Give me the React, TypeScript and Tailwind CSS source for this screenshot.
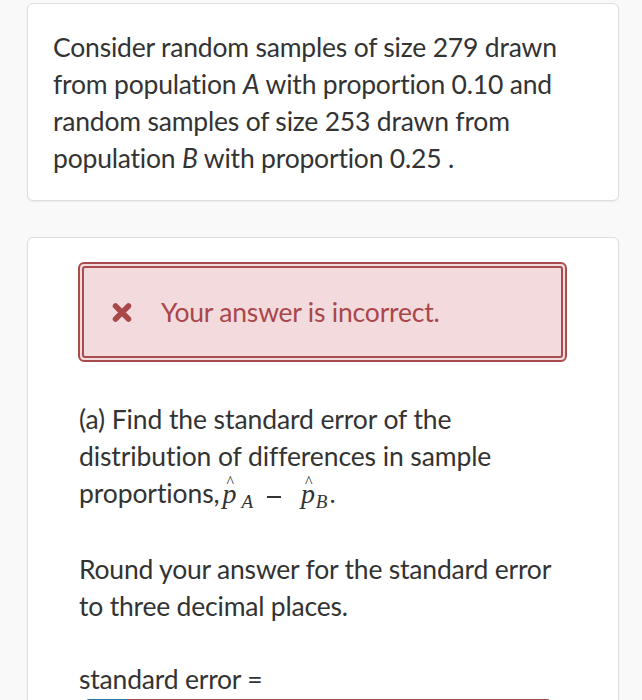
import React from "react"

const lato = { fontFamily: "Lato, 'Open Sans', sans-serif" }

function Hat({ children, sub, gap }: { children: React.ReactNode; sub: string; gap: string }) {
  return (
    <span className="font-['Liberation_Serif',serif] italic leading-none text-[28px]">
      <span className="relative inline-block leading-none">
        <span className="absolute left-[4px] -top-[6px] text-[16px] not-italic leading-none">^</span>
        {children}
      </span>
      <span className={`text-[19px] relative top-[5px] leading-none ${gap}`}>{sub}</span>
    </span>
  )
}

function ErrorIcon() {
  return (
    <svg width="22" height="21" viewBox="0 0 22 21" className="shrink-0">
      <path d="M4.5 4 L17.5 17 M17.5 4 L4.5 17" stroke="#a94848" strokeWidth="5.5" strokeLinecap="round" />
    </svg>
  )
}

export default function App() {
  return (
    <div className="min-h-[760px] w-full bg-[#f9f9f9] text-[#333] text-[26.5px] leading-[37px]" style={lato}>
      <div className="pl-[27px] pr-[23px] pt-[3px] flex flex-col gap-[36px]">
        <div className="bg-white border border-[#dedede] rounded-[6px] shadow-[0_1px_2px_rgba(0,0,0,0.06)] px-[25px] pt-[25px] pb-[23px]">
          <p className="tracking-[-0.2px]">
            Consider random samples of size 279 drawn from population <i>A</i> with proportion 0.10 and
            random samples of size 253 drawn from population <i>B</i> with proportion 0.25 .
          </p>
        </div>

        <div className="bg-white border border-[#dedede] rounded-[6px] shadow-[0_1px_2px_rgba(0,0,0,0.06)] pl-[50px] pr-[51px] pt-[24px] pb-[20px]">
          <div className="rounded-[6px] border-2 border-[#a84c4e] p-[2px] bg-[#f3dadc]">
            <div className="rounded-[3px] border-2 border-[#a84c4e] h-[92px] flex items-center pl-[27px] gap-[28px]">
              <ErrorIcon />
              <span className="text-[#a9474a] tracking-[-0.2px]">Your answer is incorrect.</span>
            </div>
          </div>

          <p className="mt-[39px] ml-[1px] tracking-[-0.1px]">
            (a) Find the standard error of the distribution of differences in sample proportions,
            <span className="ml-[3px]" />
            <Hat sub="A" gap="ml-[5px]">p</Hat>
            <span className="inline-block align-middle w-[14px] h-[2px] bg-[#333] ml-[14px] mr-[20px] relative top-[1px]" />
            <Hat sub="B" gap="ml-[1px]">p</Hat>
            <span className="font-['Liberation_Serif',serif] leading-none ml-[2px]">.</span>
          </p>

          <p className="mt-[39px] ml-[1px] tracking-[-0.2px]">Round your answer for the standard error to three decimal places.</p>

          <p className="mt-[36px] ml-[1px] tracking-[-0.2px]">standard error =</p>

          <div className="mt-[1px] ml-[8px] w-[464px] flex h-[40px] rounded-[3px] overflow-hidden">
            <div className="w-[42px] border-t-[3px] border-[#2a7ab0]" />
            <div className="flex-1 border-t-[3px] border-[#a84c4e]" />
          </div>
        </div>
      </div>
    </div>
  )
}
